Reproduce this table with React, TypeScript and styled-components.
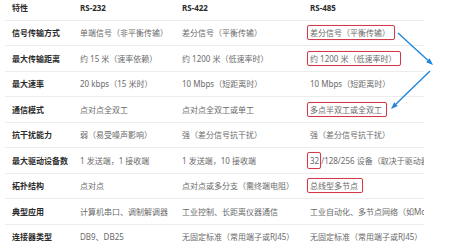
import styled, { createGlobalStyle } from "styled-components";

const GlobalStyle = createGlobalStyle`
  html, body {
    margin: 0;
    padding: 0;
    background: #ffffff;
  }
  body {
    font-family: "Noto Sans", "Noto Sans CJK SC", sans-serif;
    -webkit-font-smoothing: antialiased;
  }
`;

const Page = styled.div`
  position: relative;
  width: 474px;
  height: 248px;
  overflow: hidden;
  background: #fff;
`;

const Table = styled.div`
  width: 419px;
  margin: -5px 0 0 5px;
  overflow: hidden;
`;

const Row = styled.div<{ $head?: boolean }>`
  display: grid;
  grid-template-columns: 68px 102px 128px 1fr;
  height: 25.5px;
  align-items: center;
  border-bottom: 1px solid #ececec;
  box-sizing: border-box;
  font-size: 8px;
  white-space: nowrap;
`;

const Label = styled.div`
  padding-left: 7px;
  color: #2b2b2b;
  font-weight: 700;
`;

const Cell = styled.div<{ $head?: boolean }>`
  padding-left: 7px;
  color: ${(p) => (p.$head ? "#2b2b2b" : "#6a6a6a")};
  font-weight: ${(p) => (p.$head ? 700 : 400)};
  overflow: visible;
`;

const Mark = styled.span<{ $tall?: boolean }>`
  display: inline-block;
  margin-left: -3px;
  padding: ${(p) => (p.$tall ? "2px 1px 2px 2px" : "1px 4px 1px 2px")};
  border: 1px solid #d4394b;
  border-radius: 2px;
  box-shadow: 0 0 1px rgba(212, 57, 75, 0.35);
  line-height: 11px;
`;

const Arrows = styled.svg`
  position: absolute;
  left: 0;
  top: 0;
  pointer-events: none;
`;

type RowData = [string, string, string, React.ReactNode];

const rows: RowData[] = [
  ["信号传输方式", "单端信号（非平衡传输）", "差分信号（平衡传输）", <Mark>差分信号（平衡传输）</Mark>],
  ["最大传输距离", "约 15 米（速率依赖）", "约 1200 米（低速率时）", <Mark>约 1200 米（低速率时）</Mark>],
  ["最大速率", "20 kbps（15 米时）", "10 Mbps（短距离时）", "10 Mbps（短距离时）"],
  ["通信模式", "点对点全双工", "点对点全双工或单工", <Mark>多点半双工或全双工</Mark>],
  ["抗干扰能力", "弱（易受噪声影响）", "强（差分信号抗干扰）", "强（差分信号抗干扰）"],
  [
    "最大驱动设备数",
    "1 发送端，1 接收端",
    "1 发送端，10 接收端",
    <>
      <Mark $tall>32</Mark>/128/256 设备（取决于驱动器）
    </>,
  ],
  ["拓扑结构", "点对点", "点对点或多分支（需终端电阻）", <Mark>总线型多节点</Mark>],
  ["典型应用", "计算机串口、调制解调器", "工业控制、长距离仪器通信", "工业自动化、多节点网络（如Modbus）"],
  ["连接器类型", "DB9、DB25", "无固定标准（常用端子或RJ45）", "无固定标准（常用端子或RJ45）"],
];

function Arrow(props: { x1: number; y1: number; x2: number; y2: number }) {
  const { x1, y1, x2, y2 } = props;
  const a = Math.atan2(y2 - y1, x2 - x1);
  const len = 7;
  const w = 2.6;
  const bx = x2 - Math.cos(a) * len;
  const by = y2 - Math.sin(a) * len;
  const px = -Math.sin(a) * w;
  const py = Math.cos(a) * w;
  return (
    <g>
      <line x1={x1} y1={y1} x2={bx} y2={by} stroke="#1f86dc" strokeWidth={1.4} />
      <polygon
        points={`${x2},${y2} ${bx + px},${by + py} ${bx - px},${by - py}`}
        fill="#1f86dc"
      />
    </g>
  );
}

export default function App() {
  return (
    <Page>
      <GlobalStyle />
      <Table>
        <Row>
          <Label>特性</Label>
          <Cell $head>RS-232</Cell>
          <Cell $head>RS-422</Cell>
          <Cell $head>RS-485</Cell>
        </Row>
        {rows.map((r, i) => (
          <Row key={i}>
            <Label>{r[0]}</Label>
            <Cell>{r[1]}</Cell>
            <Cell>{r[2]}</Cell>
            <Cell>{r[3]}</Cell>
          </Row>
        ))}
      </Table>
      <Arrows width={474} height={248}>
        <Arrow x1={398} y1={33} x2={433} y2={65} />
        <Arrow x1={430} y1={71} x2={391} y2={109} />
      </Arrows>
    </Page>
  );
}
